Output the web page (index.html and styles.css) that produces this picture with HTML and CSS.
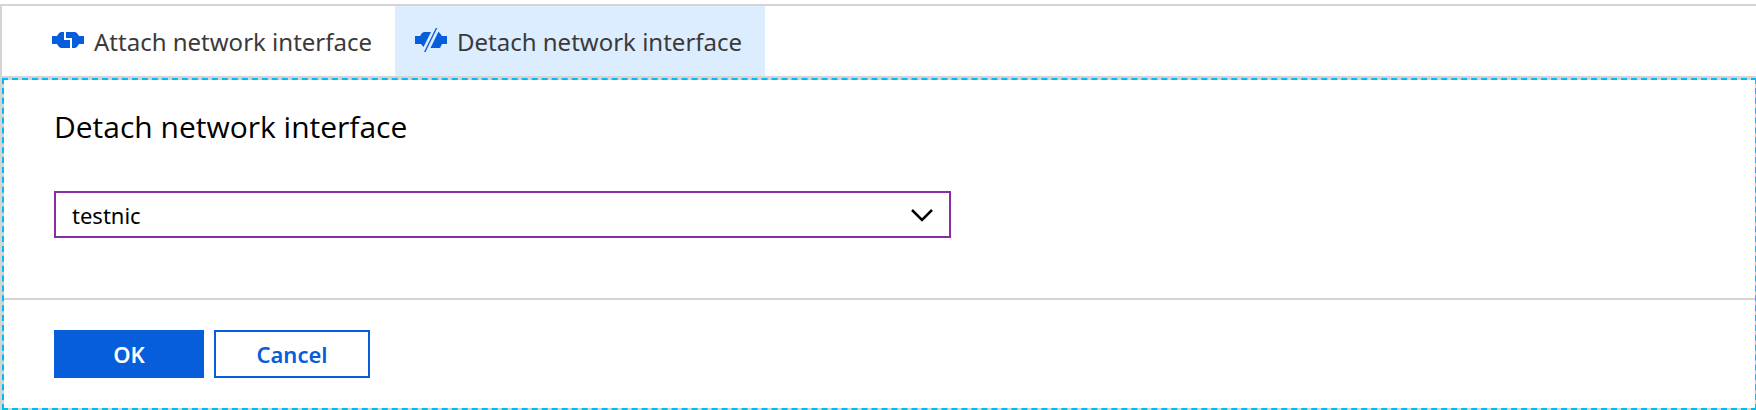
FILE: index.html
```html
<!DOCTYPE html>
<html lang="en">
<head>
  <meta charset="UTF-8">
  <title>Detach network interface</title>
  <link rel="stylesheet" href="styles.css">
</head>
<body>

  <main class="blade">
    <div class="toolbar">
      <button type="button" class="tool">
        <svg class="tool-icon" viewBox="0 0 32 26" aria-hidden="true">
          <path d="M0 8h5l2-3 2-1h3v8h6v8H9l-2-1-2-3H0z"/>
          <path d="M14 4h9l2 1 2 3h5v8h-5l-2 3-2 1h-3V10h-6z"/>
        </svg>
        <span>Attach network interface</span>
      </button>
      <button type="button" class="tool active">
        <svg class="tool-icon" viewBox="0 0 32 26" aria-hidden="true">
          <path d="M0 8h5l2-3 2-1h7L8.500 19 6 16H0z"/>
          <path d="M20.800 0h1.500L10.500 24H9z"/>
          <path d="M23.500 3.500L27 8h5v8h-5l-2 4h-9.500z"/>
        </svg>
        <span>Detach network interface</span>
      </button>
    </div>

    <form class="panel" action="#" method="POST">
      <div class="panel-body">
        <h2><label for="nic">Detach network interface</label></h2>
        <div class="dropdown">
          <select id="nic" name="nic">
            <option value="testnic">testnic</option>
          </select>
          <svg class="chevron" viewBox="0 0 22 13" aria-hidden="true">
            <path d="M1 1l10 10L21 1"/>
          </svg>
        </div>
      </div>
      <div class="panel-footer">
        <button type="submit" class="btn btn-primary">OK</button>
        <button type="button" class="btn btn-cancel">Cancel</button>
      </div>
    </form>
  </main>

</body>
</html>
```
FILE: styles.css
```css
* { box-sizing: border-box; }

body {
  margin: 0;
  padding-top: 4px;
  background: #fff;
  color: #000;
  font-family: 'Segoe UI', 'Noto Sans', 'Open Sans', sans-serif;
  overflow: hidden;
}
button, select { font-family: inherit; }

.blade {
  border-top: 2px solid #d4d4d4;
  border-left: 2px solid #d4d4d4;
}

/* Toolbar */
.toolbar {
  display: flex;
  height: 72px;
  padding-left: 30px;
  border-bottom: 2px solid #d4d4d4;
}
.tool {
  display: flex; align-items: center; gap: 10px;
  padding: 0 23px 0 20px;
  border: none;
  background: none;
  color: #3b3a39;
  font-size: 24px;
  cursor: pointer;
}
.tool.active { background: #dcedff; }
.tool-icon {
  width: 32px; height: 26px;
  fill: #075edb;
}

/* Panel, dashed focus line over the grey border */
.panel {
  margin-right: -1px;
  border: 2px dashed #00bcf2;
  background: linear-gradient(#fff, #fff) padding-box, #d4d4d4 border-box;
}
.panel-body { padding: 27px 50px 60px; }
h2 {
  margin: 0 0 44px;
  font-family: 'Segoe UI', 'Open Sans', sans-serif;
  font-size: 30px;
  font-weight: 400;
  line-height: 40px;
}

.dropdown {
  position: relative;
  max-width: 897px;
}
.dropdown select {
  display: block;
  width: 100%; height: 47px;
  padding: 0 16px;
  border: 2px solid #8a2da5;
  border-radius: 0;
  appearance: none;
  background: #fff;
  color: #000;
  font-size: 22px;
}
.chevron {
  position: absolute; right: 18px; top: 18px;
  width: 22px; height: 13px;
  fill: none; stroke: #000; stroke-width: 2.5;
  pointer-events: none;
}

.panel-footer {
  display: flex; gap: 10px;
  padding: 30px 50px;
  border-top: 2px solid #d4d4d4;
}
.btn {
  height: 48px;
  border: 2px solid #075edb;
  font-size: 22px;
  font-weight: 600;
  cursor: pointer;
}
.btn-primary { width: 150px; background: #075edb; color: #fff; }
.btn-cancel { width: 156px; background: #fff; color: #075edb; }
```
